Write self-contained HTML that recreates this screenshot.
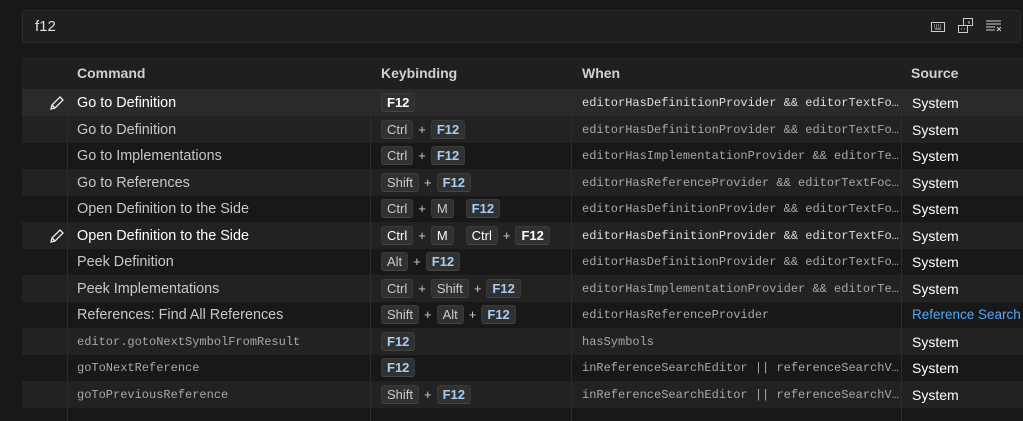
<!DOCTYPE html>
<html><head><meta charset="utf-8"><style>
*{box-sizing:border-box;margin:0;padding:0}
body{width:1023px;height:421px;background:#181818;overflow:hidden;font-family:"Segoe UI","Liberation Sans",sans-serif;color:#ccc;position:relative}
.search{position:absolute;left:22px;top:10px;width:999px;height:33px;border:1px solid #2b2b2b;border-radius:3px;background:#1f1f1f}
.search .q{position:absolute;left:12px;top:7px;font-size:15px;color:#e0e0e0}
.hdr{position:absolute;left:22px;top:57px;width:1001px;height:32px;background:#1f1f1f;font-weight:bold;font-size:14px;color:#d0d0d0}
.hdr span{position:absolute;top:8px}
.row{position:absolute;left:22px;width:1001px;height:27px;font-size:14px;color:#c8c8c8}
.row.e{background:#222222}
.row.sel{background:#2a2a2a}
.row>span{position:absolute;top:6px;white-space:nowrap}
.c1{left:55px;font-size:14.4px}.c2{left:359px;top:4px!important;display:flex;align-items:center}
.c3{left:560px;font-family:"Liberation Mono",monospace;font-size:12px;color:#a8a8a8;top:7px!important}
.c4{left:890px}
.mono{font-family:"Liberation Mono",monospace;font-size:12px;color:#a8a8a8;top:7px!important}
.k{display:inline-block;height:19px;line-height:18px;padding:0 5px;background:#313131;border:1px solid #3a3a3a;border-bottom-color:#454545;border-radius:3px;font-size:13px;color:#ccc;font-style:normal}
.k.f{color:#a9cdf0;font-weight:bold}
.k.w{color:#fff}
.k.b{font-weight:bold}
.p{margin:0 5px;font-size:13px;color:#ccc;font-style:normal}
.sp{width:12px}
.w1{color:#fff}
.vl{position:absolute;top:89px;bottom:0;width:1px;background:#2c2c2c}
.pen{position:absolute;left:27px;top:6px}
</style></head><body>
<div class="search"><span class="q">f12</span>
<svg style="position:absolute;left:907px;top:10px" width="16" height="12" viewBox="0 0 16 12"><rect x="1.5" y="1.5" width="13" height="9" fill="none" stroke="#ccc"/><path d="M4 4h1M6 4h1M8 4h1M10 4h1M4 6h1M6 6h1M8 6h1M10 6h1M5 8h6" stroke="#ccc"/></svg>
<svg style="position:absolute;left:934px;top:6px" width="18" height="18" viewBox="0 0 18 18"><rect x="6.5" y="1.5" width="9" height="7" fill="none" stroke="#ccc"/><rect x="1.5" y="8.5" width="9" height="7" fill="none" stroke="#ccc" style="fill:#1f1f1f"/><path d="M4 12h1M7 12h1M12 4v3" stroke="#ccc"/></svg>
<svg style="position:absolute;left:962px;top:8px" width="18" height="14" viewBox="0 0 18 14"><path d="M1 2h15M1 5h15M1 8h9M1 11h9M12 8l4 4M16 8l-4 4" stroke="#ccc"/></svg>
</div>
<div class="hdr"><span style="left:55px">Command</span><span style="left:359px">Keybinding</span><span style="left:560px">When</span><span style="left:889px">Source</span></div>

<div class="row sel" style="top:89px"><svg class="pen" width="16" height="16" viewBox="0 0 16 16"><path d="M11 2l3 3-8 8-4 1 1-4z M3 10l3 3" fill="none" stroke="#eee" stroke-width="1.3"/></svg><span class="c1 w1">Go to Definition</span><span class="c2"><i class="k w b">F12</i></span><span class="c3" style="color:#ddd">editorHasDefinitionProvider &amp;&amp; editorTextFo…</span><span class="c4 w1">System</span></div>
<div class="row e" style="top:116px"><span class="c1">Go to Definition</span><span class="c2"><i class="k">Ctrl</i><i class="p">+</i><i class="k f">F12</i></span><span class="c3">editorHasDefinitionProvider &amp;&amp; editorTextFo…</span><span class="c4 w1">System</span></div>
<div class="row" style="top:142px"><span class="c1">Go to Implementations</span><span class="c2"><i class="k">Ctrl</i><i class="p">+</i><i class="k f">F12</i></span><span class="c3">editorHasImplementationProvider &amp;&amp; editorTe…</span><span class="c4 w1">System</span></div>
<div class="row e" style="top:169px"><span class="c1">Go to References</span><span class="c2"><i class="k">Shift</i><i class="p">+</i><i class="k f">F12</i></span><span class="c3">editorHasReferenceProvider &amp;&amp; editorTextFoc…</span><span class="c4 w1">System</span></div>
<div class="row" style="top:195px"><span class="c1">Open Definition to the Side</span><span class="c2"><i class="k">Ctrl</i><i class="p">+</i><i class="k">M</i><i class="sp"></i><i class="k f">F12</i></span><span class="c3">editorHasDefinitionProvider &amp;&amp; editorTextFo…</span><span class="c4 w1">System</span></div>
<div class="row e" style="top:222px"><svg class="pen" width="16" height="16" viewBox="0 0 16 16"><path d="M11 2l3 3-8 8-4 1 1-4z M3 10l3 3" fill="none" stroke="#eee" stroke-width="1.3"/></svg><span class="c1 w1">Open Definition to the Side</span><span class="c2"><i class="k w">Ctrl</i><i class="p">+</i><i class="k w">M</i><i class="sp"></i><i class="k w">Ctrl</i><i class="p">+</i><i class="k w b">F12</i></span><span class="c3" style="color:#ddd">editorHasDefinitionProvider &amp;&amp; editorTextFo…</span><span class="c4 w1">System</span></div>
<div class="row" style="top:248px"><span class="c1">Peek Definition</span><span class="c2"><i class="k">Alt</i><i class="p">+</i><i class="k f">F12</i></span><span class="c3">editorHasDefinitionProvider &amp;&amp; editorTextFo…</span><span class="c4 w1">System</span></div>
<div class="row e" style="top:275px"><span class="c1">Peek Implementations</span><span class="c2"><i class="k">Ctrl</i><i class="p">+</i><i class="k">Shift</i><i class="p">+</i><i class="k f">F12</i></span><span class="c3">editorHasImplementationProvider &amp;&amp; editorTe…</span><span class="c4 w1">System</span></div>
<div class="row" style="top:301px"><span class="c1">References: Find All References</span><span class="c2"><i class="k">Shift</i><i class="p">+</i><i class="k">Alt</i><i class="p">+</i><i class="k f">F12</i></span><span class="c3">editorHasReferenceProvider</span><span class="c4" style="color:#4daafc;font-size:13.5px">Reference Search</span></div>
<div class="row e" style="top:328px"><span class="c1 mono">editor.gotoNextSymbolFromResult</span><span class="c2"><i class="k f">F12</i></span><span class="c3">hasSymbols</span><span class="c4 w1">System</span></div>
<div class="row" style="top:354px"><span class="c1 mono">goToNextReference</span><span class="c2"><i class="k f">F12</i></span><span class="c3">inReferenceSearchEditor || referenceSearchV…</span><span class="c4 w1">System</span></div>
<div class="row e" style="top:381px"><span class="c1 mono">goToPreviousReference</span><span class="c2"><i class="k">Shift</i><i class="p">+</i><i class="k f">F12</i></span><span class="c3">inReferenceSearchEditor || referenceSearchV…</span><span class="c4 w1">System</span></div>

<div class="vl" style="left:67px"></div><div class="vl" style="left:370px"></div><div class="vl" style="left:571px"></div><div class="vl" style="left:901px"></div>
</body></html>
